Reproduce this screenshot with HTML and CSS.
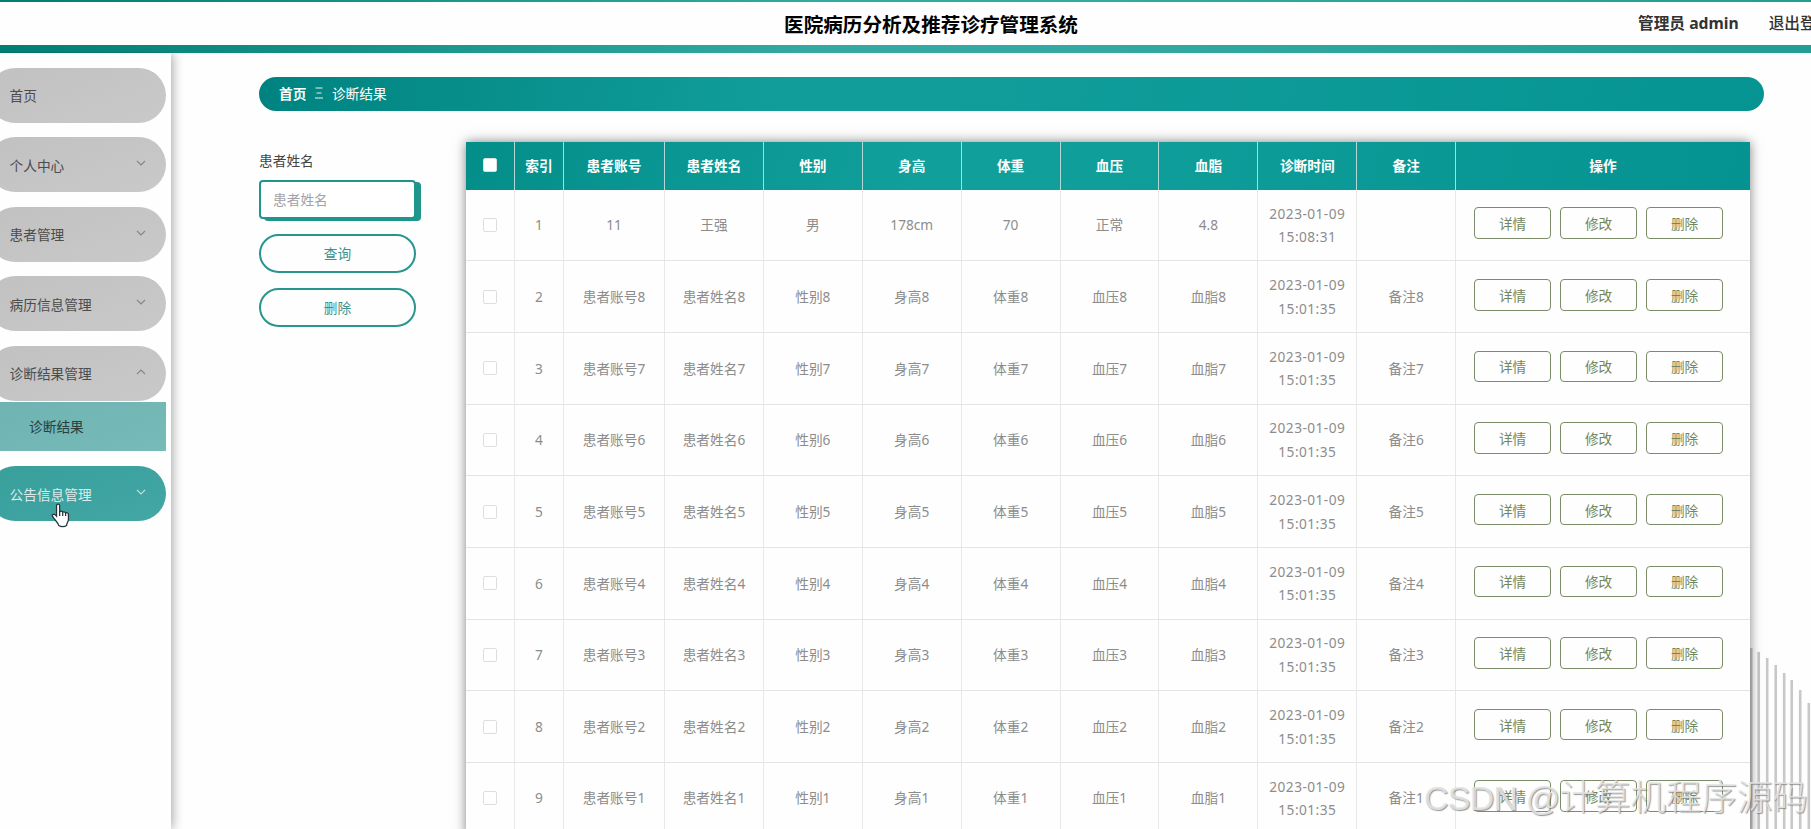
FILE: index.html
```html
<!DOCTYPE html>
<html lang="zh-CN">
<head>
    <meta charset="UTF-8">
    <meta name="viewport" content="width=device-width, initial-scale=1.0">
    <title>医院病历分析及推荐诊疗管理系统</title>
    <link rel="stylesheet" href="styles.css">
</head>
<body>

    <header class="header">
        <h1 class="title">医院病历分析及推荐诊疗管理系统</h1>
        <div class="user">
            <span class="user-name">管理员 admin</span>
            <a class="logout">退出登录</a>
        </div>
    </header>

    <div class="layout">
        <aside class="sidebar">
            <div class="menu-item"><span>首页</span></div>
            <div class="menu-item"><span>个人中心</span><svg class="arrow" viewBox="0 0 10 6"><path d="M1 1l4 4 4-4"/></svg></div>
            <div class="menu-item"><span>患者管理</span><svg class="arrow" viewBox="0 0 10 6"><path d="M1 1l4 4 4-4"/></svg></div>
            <div class="menu-item"><span>病历信息管理</span><svg class="arrow" viewBox="0 0 10 6"><path d="M1 1l4 4 4-4"/></svg></div>
            <div class="menu-item open"><span>诊断结果管理</span><svg class="arrow" viewBox="0 0 10 6"><path d="M1 5l4-4 4 4"/></svg></div>
            <div class="submenu-item">诊断结果</div>
            <div class="menu-item hover"><span>公告信息管理</span><svg class="arrow" viewBox="0 0 10 6"><path d="M1 1l4 4 4-4"/></svg></div>
        </aside>

        <main class="main">
            <div class="breadcrumb">
                <b>首页</b>
                <svg class="separator" viewBox="0 0 8 12"><path d="M0.5 1h7M1.5 6h5M0 11h8"/></svg>
                <span>诊断结果</span>
            </div>

            <div class="content">
                <form class="search">
                    <label for="name">患者姓名</label>
                    <input type="text" id="name" placeholder="患者姓名">
                    <button type="button">查询</button>
                    <button type="button">删除</button>
                </form>

                <table class="table">
                    <colgroup>
                        <col class="col-check"><col class="col-index"><col class="col-account">
                        <col class="col-text" span="8">
                        <col class="col-action">
                    </colgroup>
                    <thead>
                        <tr>
                            <th><i class="checkbox"></i></th>
                            <th>索引</th>
                            <th>患者账号</th>
                            <th>患者姓名</th>
                            <th>性别</th>
                            <th>身高</th>
                            <th>体重</th>
                            <th>血压</th>
                            <th>血脂</th>
                            <th>诊断时间</th>
                            <th>备注</th>
                            <th>操作</th>
                        </tr>
                    </thead>
                    <tbody id="rows"></tbody>
                </table>
            </div>
        </main>
    </div>

    <svg class="stripes" viewBox="0 0 64 181">
        <path d="M2.2 0v181M9.7 4v177M18.2 10v171M26.7 17v164M35.2 25v156M42.7 32v149M51.2 42v139M59.8 55v126"/>
    </svg>

    <svg class="cursor" viewBox="0 0 18 24">
        <path d="M5.2 2.7c0-2.2 3-2.2 3 0v6.1c.2-1.4 2.7-1.3 2.9.4.4-1.2 2.6-1 2.8.7.6-1 2.7-.8 2.7 1.2v4.4c0 2.6-1.6 3.6-1.8 6.2-1.9 1.5-5.4 1.4-7.4 0-.6-2.6-2.8-4-4.2-6.4-1.2-1.6-2.6-3-2-3.9.8-1.2 2.8-.4 4 1.2z"/>
        <path class="fingers" d="M8.2 8.5v4M11.1 9v3.5M13.9 10v2.5"/>
    </svg>

    <div class="watermark"><span>CSDN @</span>计算机程序源码</div>

    <script>
        let rows = [["11", "王强", "男", "178cm", "70", "正常", "4.8", "2023-01-09 15:08:31", ""]];
        for (let n = 8; n >= 1; n--) {
            rows.push(["患者账号" + n, "患者姓名" + n, "性别" + n, "身高" + n, "体重" + n, "血压" + n, "血脂" + n, "2023-01-09 15:01:35", "备注" + n]);
        }

        let html = "";
        rows.forEach(function (row, i) {
            html += "<tr><td><i class='checkbox'></i></td><td>" + (i + 1) + "</td>";
            row.forEach(function (cell, j) {
                html += (j == 7 ? "<td class='time'>" : "<td>") + cell + "</td>";
            });
            html += "<td><div class='actions'><button>详情</button><button>修改</button><button>删除</button></div></td></tr>";
        });
        document.getElementById("rows").innerHTML = html;
    </script>

</body>
</html>
```
FILE: styles.css
```css
* {
    margin: 0;
    padding: 0;
    box-sizing: border-box;
    font-family: "Noto Sans", "Noto Sans CJK SC", sans-serif;
}
body {
    height: 829px;
    overflow: hidden;
    background: #fefefe;
    font-size: 13.7px;
    color: #333;
    display: flex;
    flex-direction: column;
    position: relative;
}
/* Header */
.header {
    height: 52.5px;
    flex-shrink: 0;
    padding: 2px 0 7.5px;
    background: linear-gradient(100deg, #007d74 0%, #32aaa3 45%, #32aaa3 60%, #239d94 100%);
    position: relative;
}
.title {
    height: 43px;
    line-height: 45px;
    background: #fefefe;
    text-align: center;
    font-size: 19.6px;
    color: #000;
    padding-left: 51px;
}
.user {
    position: absolute;
    top: 2px;
    left: 1638px;
    display: flex;
    gap: 30px;
    line-height: 43px;
    font-size: 15.7px;
    font-weight: 700;
    white-space: nowrap;
}
.logout {
    font-weight: 500;
}
.layout {
    flex: 1;
    display: flex;
    min-height: 0;
}
/* Sidebar */
.sidebar {
    width: 171px;
    flex-shrink: 0;
    padding-top: 15px;
    box-shadow: 1px 0 11px rgba(0, 0, 0, 0.38);
    clip-path: inset(0 -20px 0 0);
}
.menu-item {
    width: 178px;
    height: 55px;
    margin: 0 0 14.6px -12px;
    padding: 0 20px 0 21.5px;
    border-radius: 28px;
    background: linear-gradient(160deg, #c1c1c1, #c9c9c9);
    display: flex;
    align-items: center;
    justify-content: space-between;
    line-height: 20px;
    color: #4c4c4c;
}
.menu-item span {
    padding-top: 2px;
}
.menu-item.open {
    margin-bottom: 1px;
}
.menu-item.hover {
    background: linear-gradient(160deg, #389f9b, #43a7a5);
    color: #dcebea;
}
.arrow {
    width: 10px;
    height: 6px;
    margin-bottom: 3px;
    fill: none;
    stroke: #858585;
    stroke-width: 1.1;
}
.hover .arrow {
    stroke: #bfe0de;
}
.submenu-item {
    width: 166px;
    height: 49px;
    margin-bottom: 15.6px;
    padding-left: 29px;
    line-height: 49px;
    background: linear-gradient(160deg, #6fb4b2, #77bbb9);
    color: #26403f;
}
/* Main */
.main {
    flex: 1;
    padding: 24.5px 47px 0 88px;
}
.breadcrumb {
    height: 33.5px;
    padding: 0 0 2px 20px;
    border-radius: 17px;
    background: linear-gradient(100deg, #008380, #119e9b 35%, #119e9b 45%, #069492 100%);
    color: #fff;
    display: flex;
    align-items: center;
}
.separator {
    width: 8px;
    height: 12px;
    margin: 0 9px 0 8.5px;
    stroke: #e4f4f3;
    stroke-width: 1;
}
.content {
    display: flex;
    margin-top: 31px;
}
/* Search form */
.search {
    width: 157px;
    margin-right: 50px;
    padding-top: 9px;
    flex-shrink: 0;
    display: flex;
    flex-direction: column;
}
.search label {
    line-height: 20px;
    color: #444;
}
.search input {
    height: 39px;
    margin: 9.5px 0 15px;
    padding: 0 12px;
    border: 2px solid #1f958c;
    border-radius: 4px;
    box-shadow: 5px 2px 0 #1f958c;
    background: #fff;
    font-size: 13.7px;
    outline: none;
}
.search input::placeholder {
    color: #a2a2a8;
}
.search button {
    height: 39px;
    margin-bottom: 15px;
    padding-bottom: 2px;
    border: 2px solid #2a958e;
    border-radius: 20px;
    background: #fefefe;
    color: #3a918c;
    font-size: 13.7px;
}
/* Table */
.table {
    width: 1284px;
    table-layout: fixed;
    border-collapse: separate;
    border-spacing: 0;
    background: #fefefe;
    box-shadow: 0 0 11px rgba(0, 0, 0, 0.5);
    text-align: center;
    color: #8c8c8c;
    position: relative;
    z-index: 1;
}
.col-check { width: 49px; }
.col-index { width: 49px; }
.col-account { width: 101px; }
.col-text { width: 98.9px; }
.table thead {
    background: linear-gradient(100deg, #048e8a, #119f9c 35%, #119f9c 45%, #059391);
}
.table th {
    height: 48.3px;
    padding-bottom: 2px;
    border-right: 1px solid #b2d8d6;
    color: #fff;
    font-weight: 700;
}
.table td {
    height: 71.65px;
    border-right: 1px solid #e8e8e8;
    border-bottom: 1px solid #e4e4e4;
    line-height: 23.6px;
}
.table th:last-child,
.table td:last-child {
    border-right: none;
}
.table .time {
    padding: 0 9px;
    letter-spacing: 0.45px;
}
.checkbox {
    display: block;
    width: 14px;
    height: 14px;
    margin: 0 auto;
    border: 1px solid #dcdfe2;
    border-radius: 2px;
    background: #fff;
}
.actions {
    display: flex;
    gap: 9px;
    padding: 0 0 4px 18px;
}
.actions button {
    width: 77px;
    height: 31.5px;
    border: 1px solid #7c8c68;
    border-radius: 4px;
    background: #fefefe;
    color: #74875c;
    font-size: 13.7px;
}
/* Striped decoration in the page corner */
.stripes {
    position: absolute;
    left: 1749px;
    bottom: 0;
    width: 64px;
    height: 181px;
    stroke: #c8c8c8;
    stroke-width: 2.6;
}
.cursor {
    position: absolute;
    left: 51px;
    top: 502.5px;
    width: 19px;
    height: 25px;
    fill: #fff;
    stroke: #27333c;
    stroke-width: 1.2;
}
.watermark {
    position: absolute;
    z-index: 2;
    left: 1424px;
    top: 774px;
    line-height: 44px;
    font-size: 35.5px;
    font-weight: 300;
    white-space: nowrap;
    color: rgba(228, 228, 228, 0.9);
    text-shadow: 1px 1px 1px rgba(110, 110, 110, 0.7);
}
.watermark span {
    font-family: "Liberation Sans", sans-serif;
    font-size: 34px;
    letter-spacing: -0.8px;
}
```
